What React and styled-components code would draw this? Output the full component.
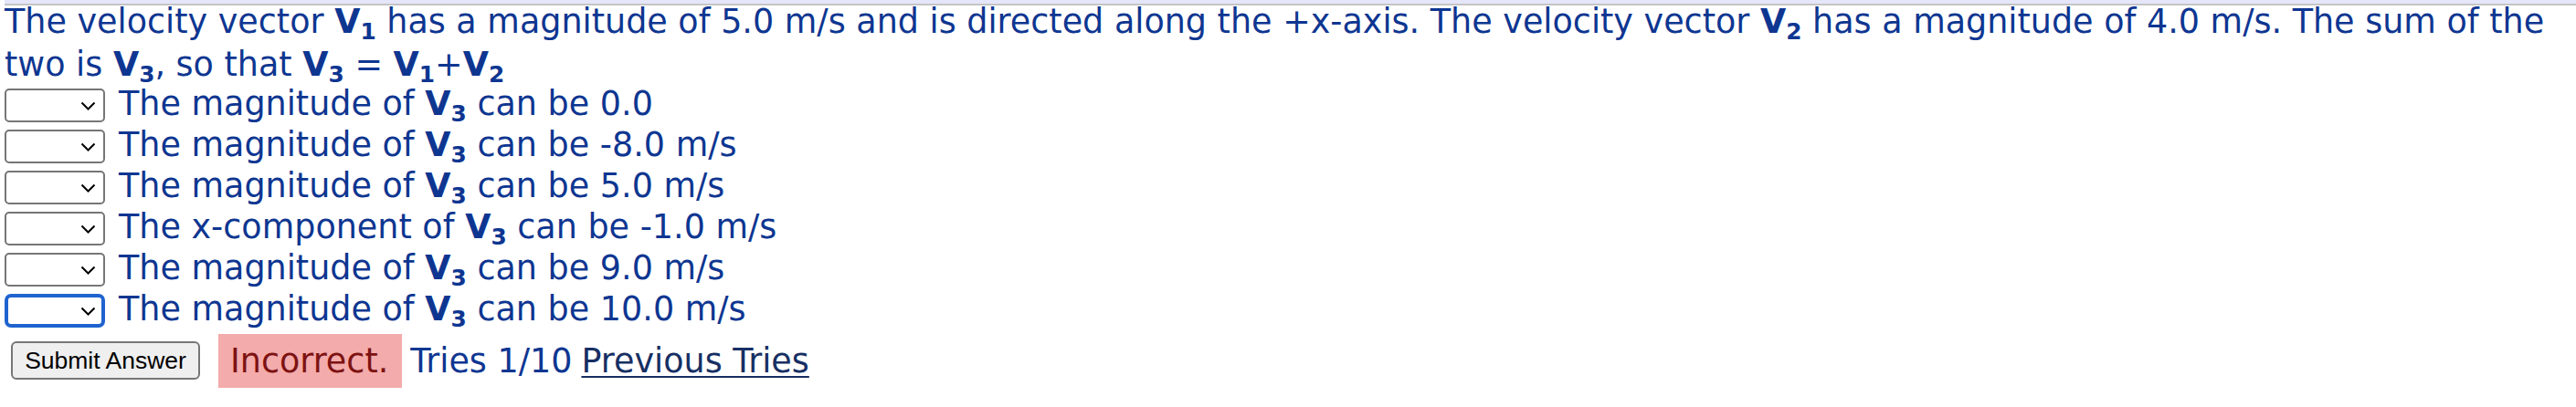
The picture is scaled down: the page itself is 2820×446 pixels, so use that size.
import styled, { createGlobalStyle } from "styled-components";

const GlobalStyle = createGlobalStyle`
  html, body {
    margin: 0;
    padding: 0;
    background: #ffffff;
  }
`;

const Page = styled.div`
  font-family: "DejaVu Sans", Verdana, sans-serif;
  font-size: 36.5px;
  color: #0e3691;
  padding-left: 5px;
`;

const TopBar = styled.div`
  height: 4px;
  background: #e6e6fa;
  border-bottom: 2px solid #c4c4c4;
`;

const Question = styled.p`
  margin: -6px 0 0;
  line-height: 47px;
`;

const Vec = styled.b`
  font-weight: bold;
`;

const Sub = styled.sub`
  font-size: 68%;
  line-height: 0;
  vertical-align: -7px;
`;

const List = styled.div`
  display: flex;
  flex-direction: column;
`;

const Row = styled.div`
  display: flex;
  align-items: flex-start;
  height: 45px;
  gap: 15px;
`;

const SelectBox = styled.div`
  box-sizing: border-box;
  width: 110px;
  height: 37px;
  margin-top: 3px;
  background: #fff;
  border: ${(p) => (p.focused ? "4px solid #1f63cf" : "2px solid #767676")};
  border-radius: ${(p) => (p.focused ? "7px" : "5px")};
  display: flex;
  align-items: center;
  justify-content: flex-end;
  padding-right: ${(p) => (p.focused ? "6px" : "8px")};
`;

const Label = styled.span`
  line-height: 37px;
  margin-top: 1px;
  white-space: nowrap;
`;

const Footer = styled.div`
  display: flex;
  align-items: center;
  height: 62px;
  white-space: nowrap;
`;

const SubmitButton = styled.button`
  box-sizing: border-box;
  margin: 0 20px 0 7px;
  width: 207px;
  height: 42px;
  font-family: "Liberation Sans", Arial, sans-serif;
  font-size: 26.5px;
  color: #000;
  background: #efefef;
  border: 2px solid #767676;
  border-radius: 6px;
  padding: 0;
`;

const Badge = styled.span`
  display: inline-flex;
  align-items: center;
  height: 59px;
  padding: 0 15px 0 13px;
  background: #f3abab;
  color: #7d1212;
`;

const Tries = styled.span`
  margin-left: 9px;
`;

const PrevLink = styled.a`
  margin-left: 10px;
  color: #172f63;
  text-decoration: underline;
  text-decoration-thickness: 2px;
  text-underline-offset: 4px;
`;

const Chevron = () => (
  <svg width="17" height="10" viewBox="0 0 17 10">
    <path d="M1.5 1.5 L8.5 8.5 L15.5 1.5" fill="none" stroke="#000" strokeWidth="2" />
  </svg>
);

const V = ({ n }) => (
  <Vec>
    V<Sub>{n}</Sub>
  </Vec>
);

const statements = [
  ["The magnitude of ", " can be 0.0"],
  ["The magnitude of ", " can be -8.0 m/s"],
  ["The magnitude of ", " can be 5.0 m/s"],
  ["The x-component of ", " can be -1.0 m/s"],
  ["The magnitude of ", " can be 9.0 m/s"],
  ["The magnitude of ", " can be 10.0 m/s"],
];

export default function App() {
  return (
    <>
      <GlobalStyle />
      <Page>
        <TopBar />
        <Question>
          The velocity vector <V n="1" /> has a magnitude of 5.0 m/s and is directed along the
          +x-axis. The velocity vector <V n="2" /> has a magnitude of 4.0 m/s. The sum of the two is{" "}
          <V n="3" />, so that <V n="3" /> = <V n="1" />+<V n="2" />
        </Question>
        <List>
          {statements.map(([before, after], i) => (
            <Row key={i}>
              <SelectBox focused={i === statements.length - 1}>
                <Chevron />
              </SelectBox>
              <Label>
                {before}
                <V n="3" />
                {after}
              </Label>
            </Row>
          ))}
        </List>
        <Footer>
          <SubmitButton>Submit Answer</SubmitButton>
          <Badge>Incorrect.</Badge>
          <Tries>Tries 1/10</Tries>
          <PrevLink>Previous Tries</PrevLink>
        </Footer>
      </Page>
    </>
  );
}
